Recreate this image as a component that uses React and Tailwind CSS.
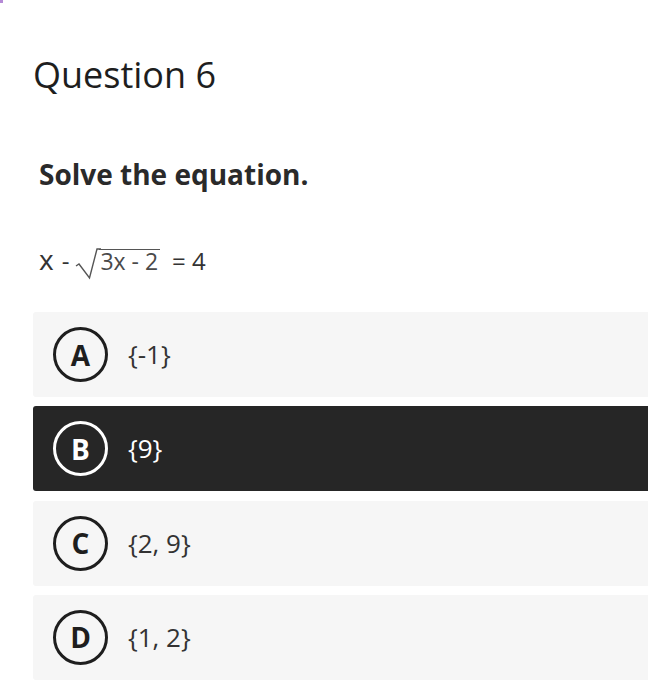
const options = [
  { letter: 'A', text: '{-1}' },
  { letter: 'B', text: '{9}', selected: true },
  { letter: 'C', text: '{2, 9}' },
  { letter: 'D', text: '{1, 2}' },
];

function Radical() {
  return (
    <span className="relative inline-flex items-baseline text-[#4a4a4a] text-[23px] leading-none ml-[30px] pl-[1px] pr-[2px] border-t-[1.5px] border-[#555]">
      <svg
        width="26"
        height="34"
        viewBox="0 0 26 34"
        className="absolute -left-[24px] -top-[2px]"
      >
        <path d="M1 18 L4 16 L14.5 30 L22 1 L26 1" fill="none" stroke="#555" strokeWidth="1.4" />
      </svg>
      3x - 2
    </span>
  );
}

export default function App() {
  return (
    <div className="relative w-[648px] h-[700px] bg-white overflow-hidden font-['Open_Sans',sans-serif] text-[#222]">
      <div className="absolute left-0 top-0 w-[3px] h-[3px] bg-[#b58ad6]" />

      <div className="pl-[33px] pt-[51px]">
        <h1 className="text-[36px] leading-[48px] text-[#1e1e1e]">Question 6</h1>

        <div className="pl-[6px] pt-[56px]">
          <p className="text-[28px] font-bold leading-[38px] text-[#2a2a2a]">Solve the equation.</p>
          <div className="flex items-baseline mt-[52px] h-[34px] leading-none text-[#333]">
            <span className="text-[28px]">x</span>
            <span className="text-[24px] ml-[8px]">-</span>
            <Radical />
            <span className="text-[24px] ml-[12px]">= 4</span>
          </div>
        </div>

        <div className="flex flex-col gap-[9.33px] mt-[33px] -mr-[10px]">
          {options.map((o) => (
            <div
              key={o.letter}
              className={`flex items-center h-[85px] rounded-[3px] pl-[20px] ${
                o.selected ? 'bg-[#262626] text-white' : 'bg-[#f6f6f6] text-[#333]'
              }`}
            >
              <span
                className={`flex items-center justify-center w-[55px] h-[55px] rounded-full border-[3px] text-[28px] font-bold leading-none ${
                  o.selected ? 'border-white' : 'border-[#1e1e1e] text-[#1e1e1e]'
                }`}
              >
                {o.letter}
              </span>
              <span className="ml-[20px] text-[26px]">{o.text}</span>
            </div>
          ))}
        </div>
      </div>
    </div>
  );
}
